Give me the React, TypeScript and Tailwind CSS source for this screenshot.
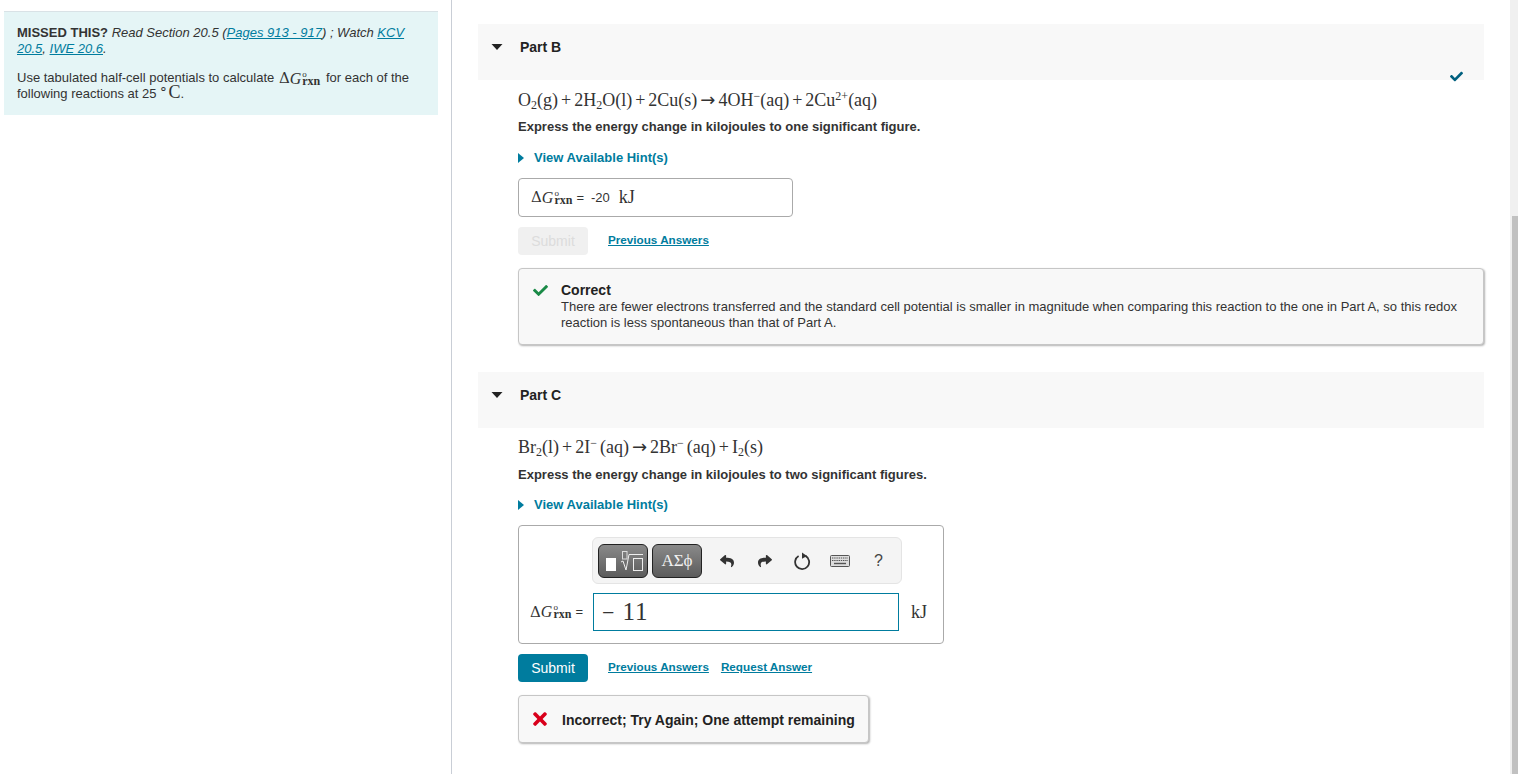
import React from "react";
import { FaCheck, FaTimes, FaReply, FaShare } from "react-icons/fa";

const serif = "font-['Liberation_Serif',serif]";

function DeltaG() {
  return (
    <span className={`${serif} inline-flex h-[14px] items-center align-middle text-[#333] leading-none`}>
      <span className="font-['DejaVu_Serif',serif] text-[15px]">Δ</span>
      <span className="italic text-[16px]">G</span>
      <span className="inline-flex flex-col ml-[1px] leading-none">
        <span className="text-[9px] h-[6px] leading-[6px] mt-[-2px]">o</span>
        <span className="text-[12px] h-[8px] leading-[8px] font-bold">rxn</span>
      </span>
    </span>
  );
}

function Chevron() {
  return (
    <svg width="12" height="8" viewBox="0 0 12 8" className="shrink-0">
      <path d="M0.5 1h11L6 7z" fill="#222" />
    </svg>
  );
}

function Hint() {
  return (
    <div className="flex items-center h-5 gap-[10px] text-[13px] font-bold text-[#007c9e]">
      <svg width="6" height="10" viewBox="0 0 6 10"><path d="M0 0l6 5-6 5z" fill="#007c9e" /></svg>
      <span>View Available Hint(s)</span>
    </div>
  );
}

function PartHeader({ title, done }: { title: string; done?: boolean }) {
  return (
    <div className="relative h-14 bg-[#f8f8f8] pl-[13px] pt-[14px] flex items-start gap-[17px]">
      <span className="mt-[5px]"><Chevron /></span>
      <span className="text-[14px] font-bold leading-[18px] text-[#222]">{title}</span>
      {done && <FaCheck className="absolute right-[21px] bottom-[-3px] text-[#00607f] text-[13px]" />}
    </div>
  );
}

function Link({ children }: { children: React.ReactNode }) {
  return <a className="text-[11.7px] font-bold underline text-[#007c9e]">{children}</a>;
}

function MathLine({ children }: { children: React.ReactNode }) {
  return <div className={`${serif} h-[20px] flex items-center text-[18px] leading-[20px] text-[#333] whitespace-pre`}>{children}</div>;
}

function Sub({ children }: { children: React.ReactNode }) {
  return <sub className="text-[12px] leading-none bottom-[-3px] relative align-baseline">{children}</sub>;
}
function Sup({ children }: { children: React.ReactNode }) {
  return <sup className="text-[12px] leading-none top-[-6px] relative align-baseline">{children}</sup>;
}
function Op({ children }: { children: React.ReactNode }) {
  return <span className="mx-[3px]">{children}</span>;
}
function Arrow() {
  return <span className="mx-[3px] font-['DejaVu_Sans',sans-serif] text-[18px]">→</span>;
}

export default function App() {
  return (
    <div className="flex h-[774px] w-[1518px] overflow-hidden bg-white font-['Liberation_Sans',Arial,sans-serif] text-[#333]">
      <aside className="w-[452px] shrink-0 border-r border-[#c9ced6] pt-[11px] pl-1 pr-[13px]">
        <div className="h-[104px] bg-[#e5f5f6] border-t border-[#d9e2e6] pl-[13px] pr-[28px] pt-[13px] text-[13px] leading-4">
          <p>
            <b>MISSED THIS?</b>{" "}
            <i>Read Section 20.5 (<a className="underline text-[#007c9e]">Pages 913 - 917</a>) ; Watch <a className="underline text-[#007c9e]">KCV 20.5</a>, <a className="underline text-[#007c9e]">IWE 20.6</a>.</i>
          </p>
          <p className="mt-[13px]">
            Use tabulated half-cell potentials to calculate <span className="ml-[1px] mr-[2px]"><DeltaG /></span> for each of the following reactions at 25
            <span className={`${serif} ml-[3px] text-[18px] leading-[0]`}><span className="text-[14px] relative top-[-5px]">∘</span>C</span>.
          </p>
        </div>
      </aside>

      <main className="flex-1 pl-[26px] pr-[26px] pt-6">
        <PartHeader title="Part B" done />
        <div className="pl-10">
          <div className="pt-[10px]">
            <MathLine>
              <span>O<Sub>2</Sub>(g)<Op>+</Op>2H<Sub>2</Sub>O(l)<Op>+</Op>2Cu(s)<Arrow />4OH<Sup>−</Sup>(aq)<Op>+</Op>2Cu<Sup>2+</Sup>(aq)</span>
            </MathLine>
          </div>
          <div className="mt-[9px] h-4 text-[13px] font-bold leading-4">Express the energy change in kilojoules to one significant figure.</div>
          <div className="mt-[13px]"><Hint /></div>
          <div className="mt-[10px] w-[275px] h-[39px] rounded border border-[#aaa] flex items-center pl-3 text-[13px]">
            <DeltaG />
            <span className="ml-[4px]">=</span>
            <span className="ml-[7px]">-20</span>
            <span className={`${serif} ml-[9px] text-[18px]`}>kJ</span>
          </div>
          <div className="mt-[10px] flex items-center">
            <div className="w-[70px] h-7 rounded-sm bg-[#f0f0f0] text-[#dcdcdc] text-[14px] flex items-center justify-center">Submit</div>
            <div className="ml-5 mt-[-5px]"><Link>Previous Answers</Link></div>
          </div>
          <div className="mt-[13px] h-[77px] rounded border border-[#c6c6c6] bg-[#f8f8f8] shadow-[1px_1px_2px_rgba(0,0,0,0.3)] flex pl-[14px] pt-[13px]">
            <FaCheck className="text-[#1a8a47] text-[15px] mt-[1px] shrink-0" />
            <div className="ml-[13px] text-[13px] leading-4 pr-5">
              <div className="text-[14px] font-bold text-[#222] mb-[1px]">Correct</div>
              <div>There are fewer electrons transferred and the standard cell potential is smaller in magnitude when comparing this reaction to the one in Part A, so this redox reaction is less spontaneous than that of Part A.</div>
            </div>
          </div>
        </div>

        <div className="mt-[27px]"><PartHeader title="Part C" /></div>
        <div className="pl-10">
          <div className="pt-[9px]">
            <MathLine>
              <span>Br<Sub>2</Sub>(l)<Op>+</Op>2I<Sup>−</Sup><span className="ml-[3px]">(aq)</span><Arrow />2Br<Sup>−</Sup><span className="ml-[3px]">(aq)</span><Op>+</Op>I<Sub>2</Sub>(s)</span>
            </MathLine>
          </div>
          <div className="mt-[10px] h-4 text-[13px] font-bold leading-4">Express the energy change in kilojoules to two significant figures.</div>
          <div className="mt-[12px]"><Hint /></div>
          <div className="mt-[10px] w-[426px] h-[119px] rounded border border-[#aaa] flex flex-col">
            <div className="ml-[73px] mt-[11px] w-[310px] h-[47px] rounded-md bg-[#f4f4f4] border border-[#e4e4e4] flex items-center pl-[5px]">
              <div className="w-[50px] h-[34px] rounded-md border border-[#222] bg-gradient-to-b from-[#8a8a8a] to-[#5c5c5c] flex items-center justify-center">
                <svg width="48" height="32" viewBox="0 0 48 32">
                  <rect x="7" y="13" width="10" height="13" fill="#fff" />
                  <rect x="23.5" y="6.5" width="4.5" height="7.5" fill="none" stroke="#ddd" />
                  <path d="M22 17l2-1 3 9 3-15.5h14" fill="none" stroke="#eee" strokeWidth="1" />
                  <rect x="34.5" y="13.5" width="9" height="12" fill="none" stroke="#eee" />
                </svg>
              </div>
              <div className={`${serif} ml-[4px] w-[50px] h-[34px] rounded-md border border-[#222] bg-gradient-to-b from-[#8a8a8a] to-[#5c5c5c] text-[#f2f2f2] text-[17px] flex items-center justify-center`}>ΑΣϕ</div>
              <FaReply className="ml-[18px] text-[14px] text-[#333]" />
              <FaShare className="ml-[24px] text-[14px] text-[#333]" />
              <svg className="ml-[22px]" width="17" height="18" viewBox="0 0 17 18" fill="none">
                <path d="M11.5 3.9A7 7 0 1 1 4.6 4" stroke="#333" strokeWidth="1.8" />
                <path d="M8 0.6l5 3.4-5 2.8z" fill="#333" />
              </svg>
              <svg className="ml-[19px]" width="20" height="12" viewBox="0 0 20 12" fill="none">
                <rect x="0.5" y="0.5" width="19" height="11" rx="1" fill="#ddd" stroke="#555" />
                <path d="M2 3h16M2 5.5h16" stroke="#555" strokeWidth="1.2" strokeDasharray="1.4 0.8" />
                <path d="M4 8.5h12" stroke="#555" strokeWidth="1.4" />
              </svg>
              <span className="ml-[24px] text-[16px] text-[#444]">?</span>
            </div>
            <div className="mt-[9px] flex items-center pl-[11px]">
              <DeltaG />
              <span className="ml-[4px] text-[13px]">=</span>
              <div className={`${serif} ml-[10px] w-[306px] h-[38px] border border-[#007c9e] flex items-center pl-2 text-[25px] text-[#333]`}>
                <span className="text-[22px]">−</span><span className="ml-[8px] tracking-[1px]">11</span>
              </div>
              <span className={`${serif} ml-[12px] text-[18px]`}>kJ</span>
            </div>
          </div>
          <div className="mt-[10px] flex items-center">
            <div className="w-[70px] h-7 rounded-sm bg-[#007c9e] text-white text-[14px] flex items-center justify-center">Submit</div>
            <div className="ml-5 mt-[-2px] flex gap-3"><Link>Previous Answers</Link><Link>Request Answer</Link></div>
          </div>
          <div className="mt-[13px] w-[351px] h-[48px] rounded border border-[#c6c6c6] bg-[#f8f8f8] shadow-[1px_1px_2px_rgba(0,0,0,0.3)] flex items-center pl-[11px]">
            <FaTimes className="text-[#d9001b] text-[20px] shrink-0" />
            <span className="ml-[12px] mt-[2px] text-[14px] font-bold text-[#222] whitespace-nowrap">Incorrect; Try Again; One attempt remaining</span>
          </div>
        </div>
      </main>

      <div className="w-[8px] shrink-0 bg-[#f0f0f0] flex flex-col items-end">
        <div className="mt-[216px] w-[6px] flex-1 bg-[#c1c1c1]" />
      </div>
    </div>
  );
}
